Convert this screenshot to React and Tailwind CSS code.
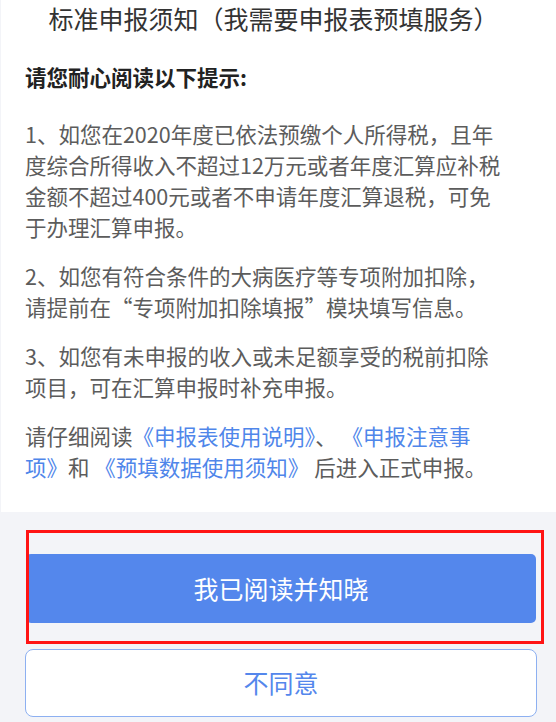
import React from 'react'

const font = { fontFamily: '"Noto Sans CJK SC", "Noto Sans", sans-serif' }

const Link = ({ children }) => <span className="text-[#4f86ea]">{children}</span>

// one rendered line of a tip paragraph
const Line = ({ children }) => <span className="block whitespace-nowrap">{children}</span>

export default function App() {
  return (
    <div className="w-[556px] h-[722px] bg-[#f3f4f8] overflow-hidden" style={font}>
      {/* notice card */}
      <div className="ml-px bg-white pb-[30px]">
        <h1 className="text-center pr-[10px] text-[25px] leading-[36px] text-[#333]">
          标准申报须知（我需要申报表预填服务）
        </h1>
        <h2 className="mt-[26px] pl-[24px] text-[21.5px] leading-[30px] font-bold text-[#222]">
          请您耐心阅读以下提示:
        </h2>
        <div className="mt-[26px] pl-[24px] text-[21.5px] leading-[31px] text-[#5c5c5c] space-y-[18px]">
          <p>
            <Line>1、如您在2020年度已依法预缴个人所得税，且年</Line>
            <Line>度综合所得收入不超过12万元或者年度汇算应补税</Line>
            <Line>金额不超过400元或者不申请年度汇算退税，可免</Line>
            <Line>于办理汇算申报。</Line>
          </p>
          <p>
            <Line>2、如您有符合条件的大病医疗等专项附加扣除，</Line>
            <Line>请提前在“专项附加扣除填报”模块填写信息。</Line>
          </p>
          <p>
            <Line>3、如您有未申报的收入或未足额享受的税前扣除</Line>
            <Line>项目，可在汇算申报时补充申报。</Line>
          </p>
          <p>
            <Line>
              请仔细阅读<Link>《申报表使用说明》</Link>、 <Link>《申报注意事</Link>
            </Line>
            <Line>
              <Link>项》</Link>和 <Link>《预填数据使用须知》</Link> 后进入正式申报。
            </Line>
          </p>
        </div>
      </div>

      {/* actions */}
      <div className="pt-[42px] pl-[26px]">
        <div className="relative">
          <button className="w-[510px] h-[69px] rounded-[5px] bg-[#5487ec] text-white text-[25px]">
            我已阅读并知晓
          </button>
          <div className="absolute -top-[24px] left-0 w-[518px] h-[114px] border-[3px] border-[#ff1414] pointer-events-none" />
        </div>
        <button className="mt-[26px] -ml-px w-[512px] h-[68px] rounded-[8px] bg-white border border-[#8db0f1] text-[#5487ec] text-[25px]">
          不同意
        </button>
      </div>
    </div>
  )
}
